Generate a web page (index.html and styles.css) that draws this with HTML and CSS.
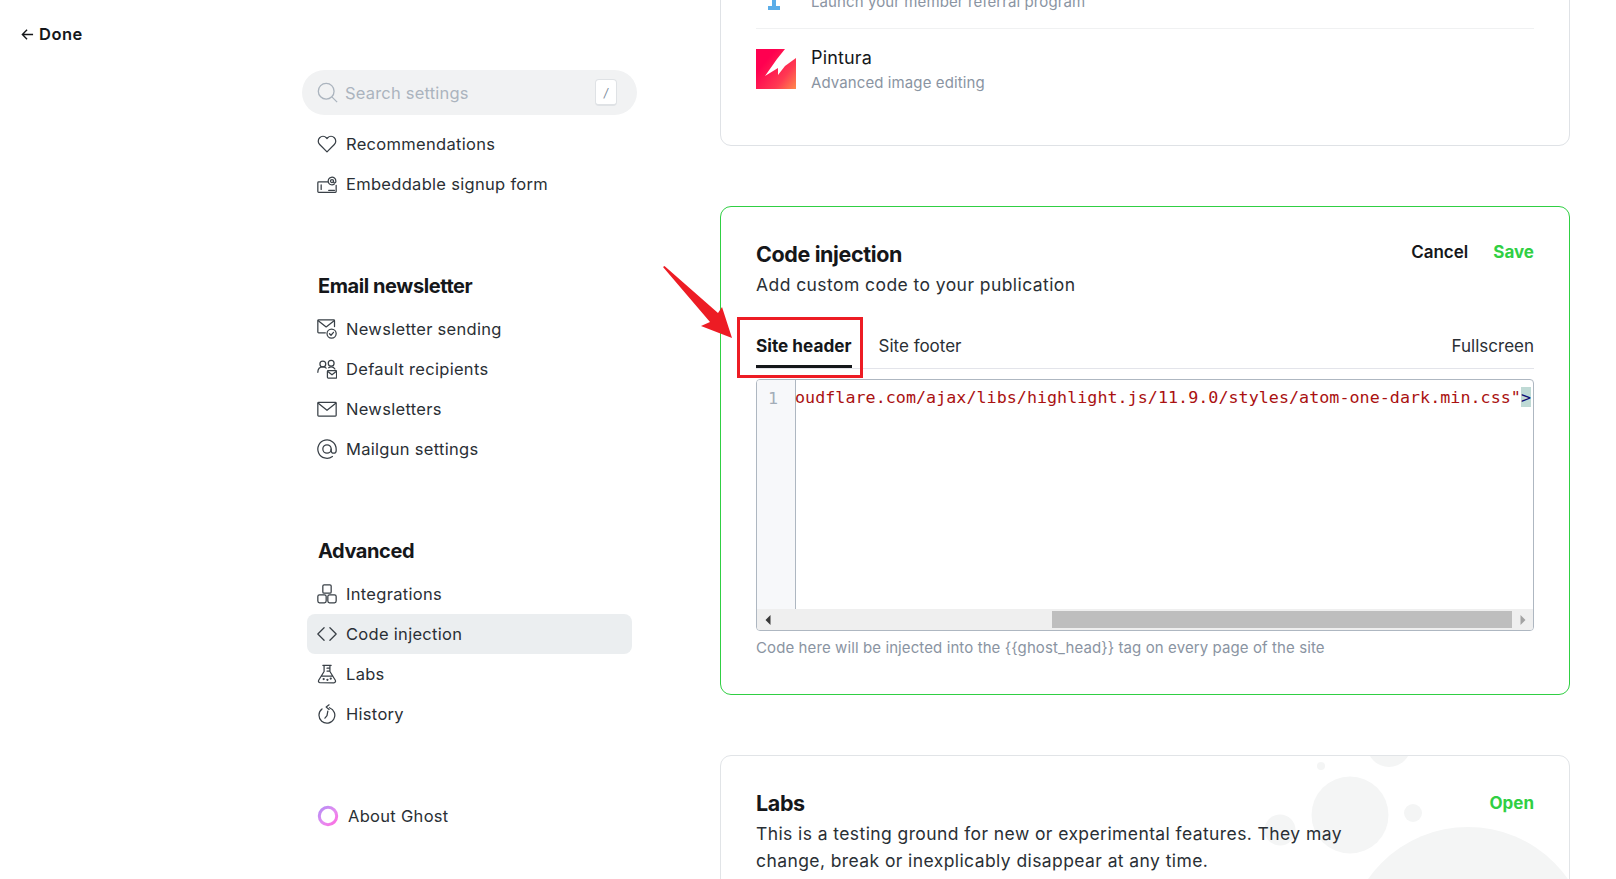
FILE: index.html
```html
<!DOCTYPE html>
<html lang="en">
<head>
<meta charset="utf-8">
<title>Settings</title>
<link rel="stylesheet" href="styles.css">
</head>
<body>
<div class="shell">
  <div class="back">
    <a class="done">
      <svg class="done-arrow" viewBox="0 0 14 14"><path d="M13 7H1.5M6.5 2 1.5 7l5 5"/></svg>
      <span>Done</span>
    </a>
  </div>

  <nav class="sidebar">
    <div class="search">
      <svg class="search-icon" viewBox="0 0 24 24"><circle cx="10.5" cy="10.5" r="9"/><path d="m17 17 6 6"/></svg>
      <span class="search-text">Search settings</span>
      <kbd class="search-key">/</kbd>
    </div>
    <ul class="nav-list">
      <li class="nav-item">
        <svg class="nav-icon" viewBox="0 0 24 24"><path d="M12 21.5 3.2 12.6a5.7 5.7 0 0 1 0-8.1 5.7 5.7 0 0 1 8 0l.8.9.8-.9a5.7 5.7 0 0 1 8 0 5.7 5.7 0 0 1 0 8.1z"/></svg>
        <span>Recommendations</span>
      </li>
      <li class="nav-item">
        <svg class="nav-icon" viewBox="0 0 24 24"><path d="M13 9.500H2a1 1 0 0 0-1 1V21a1 1 0 0 0 1 1h20a1 1 0 0 0 1-1v-7.500"/><path d="M5 13v5.500M14 19.500h7"/><circle cx="18" cy="8.500" r="1.800"/><path d="M19.800 8.500v.8a1.400 1.400 0 0 0 2.800 0v-.8a4.600 4.600 0 1 0-1.800 3.600"/></svg>
        <span>Embeddable signup form</span>
      </li>
    </ul>

    <h2 class="nav-title">Email newsletter</h2>
    <ul class="nav-list">
      <li class="nav-item">
        <svg class="nav-icon" viewBox="0 0 24 24"><path d="M10 16.5H2a1 1 0 0 1-1-1V2a1 1 0 0 1 1-1h18a1 1 0 0 1 1 1v7"/><path d="m1.500 2 9.500 7.500L20.500 2"/><circle cx="17.500" cy="17.500" r="5.500"/><path d="m15 17.700 1.800 1.800 3-3.500"/></svg>
        <span>Newsletter sending</span>
      </li>
      <li class="nav-item">
        <svg class="nav-icon" viewBox="0 0 24 24"><circle cx="7" cy="6" r="3.500"/><circle cx="17" cy="5" r="3.500"/><path d="M1 16c0-4 2.500-6.500 6-6.500 1.500 0 3 .5 4 1.500M14 10.500c1-.7 2-1 3-1 2 0 3.500.8 4.500 2.500"/><rect x="12.500" y="14" width="11" height="9" rx="1"/><path d="m13 15 5 4 5-4"/></svg>
        <span>Default recipients</span>
      </li>
      <li class="nav-item">
        <svg class="nav-icon" viewBox="0 0 24 24"><rect x="1" y="4" width="22" height="16.500" rx="1"/><path d="m1.500 5 10.500 8.500L22.500 5"/></svg>
        <span>Newsletters</span>
      </li>
      <li class="nav-item">
        <svg class="nav-icon" viewBox="0 0 24 24"><circle cx="12" cy="12" r="5"/><path d="M17 12v2a3 3 0 0 0 6 0v-2a11 11 0 1 0-4.500 9"/></svg>
        <span>Mailgun settings</span>
      </li>
    </ul>

    <h2 class="nav-title">Advanced</h2>
    <ul class="nav-list">
      <li class="nav-item">
        <svg class="nav-icon" viewBox="0 0 24 24"><rect x="7" y="1" width="10" height="10" rx="1.500"/><rect x="1" y="13" width="10" height="9.500" rx="2"/><rect x="13" y="13" width="10" height="9.500" rx="2"/></svg>
        <span>Integrations</span>
      </li>
      <li class="nav-item is-active">
        <svg class="nav-icon" viewBox="0 0 24 24"><path d="M8.500 4.500 1 12l7.500 7.500M15.500 4.500 23 12l-7.500 7.500"/></svg>
        <span>Code injection</span>
      </li>
      <li class="nav-item">
        <svg class="nav-icon" viewBox="0 0 24 24"><path d="M7 1.500h10M8.500 1.500v7.500L2 19.500A2 2 0 0 0 3.700 22.500h16.600a2 2 0 0 0 1.700-3L15.500 9V1.500M12 5h3.500M12 8.500h3.500M5 14.500h14"/><circle cx="8" cy="18" r=".6"/><circle cx="12.500" cy="19" r=".6"/><circle cx="16.500" cy="17.500" r=".6"/></svg>
        <span>Labs</span>
      </li>
      <li class="nav-item">
        <svg class="nav-icon" viewBox="0 0 24 24"><path d="M15 4.500a9.500 9.500 0 1 1-9 1.500"/><path d="M14.500 1 11 3.500l3.500 3"/><path d="M13 8.500 12 14l-2.500 3"/></svg>
        <span>History</span>
      </li>
    </ul>

    <a class="about">
      <svg class="about-ring" viewBox="0 0 22 22">
        <defs>
          <linearGradient id="ringGrad" x1="0" y1="0" x2="1" y2="1">
            <stop offset="0" stop-color="#b58cf5"/>
            <stop offset=".55" stop-color="#e58cf0"/>
            <stop offset="1" stop-color="#ff6ae0"/>
          </linearGradient>
        </defs>
        <circle cx="11" cy="11" r="8.700" fill="none" stroke="url(#ringGrad)" stroke-width="3"/>
      </svg>
      <span>About Ghost</span>
    </a>
  </nav>

  <main class="content">
    <section class="card card-top">
      <div class="app-row app-row-divided">
        <svg class="app-logo" viewBox="0 0 40 40"><path class="app-logo-blue" d="M16 24h4v12h4v4H12v-4h4z"/></svg>
        <div class="app-text-clipped">
          <div class="app-desc">Launch your member referral program</div>
        </div>
      </div>
      <div class="app-row">
        <svg class="app-logo" viewBox="0 0 40 40">
          <defs>
            <linearGradient id="pinturaGrad" x1=".2" y1=".35" x2="1" y2="1">
              <stop offset="0" stop-color="#ff0050"/>
              <stop offset=".6" stop-color="#ff3a52"/>
              <stop offset="1" stop-color="#ff8a4c"/>
            </linearGradient>
          </defs>
          <rect width="40" height="40" fill="url(#pinturaGrad)"/>
          <path fill="#fff" d="M29 0h11v9L29 17l-7 9v-7L9 27l12-17z"/>
        </svg>
        <div>
          <div class="app-name">Pintura</div>
          <div class="app-desc">Advanced image editing</div>
        </div>
      </div>
    </section>

    <section class="card card-code">
      <div class="card-head">
        <div>
          <h3 class="card-title">Code injection</h3>
          <p class="card-sub">Add custom code to your publication</p>
        </div>
        <div class="card-actions">
          <button class="btn">Cancel</button>
          <button class="btn btn-green">Save</button>
        </div>
      </div>

      <div class="tabs">
        <span class="tab is-active">Site header</span>
        <span class="tab">Site footer</span>
        <span class="tab tab-end">Fullscreen</span>
      </div>

      <div class="editor">
        <div class="editor-body">
          <div class="gutter">1</div>
          <div class="code"><span class="code-str">oudflare.com/ajax/libs/highlight.js/11.9.0/styles/atom-one-dark.min.css"</span><span class="code-tag">&gt;</span></div>
        </div>
        <div class="hscroll">
          <svg class="hscroll-arrow" viewBox="0 0 6 10"><path d="M5.500 0v10L.5 5z"/></svg>
          <div class="hscroll-track"><div class="hscroll-thumb"></div></div>
          <svg class="hscroll-arrow hscroll-arrow-off" viewBox="0 0 6 10"><path d="M.5 0v10l5-5z"/></svg>
        </div>
      </div>
      <p class="hint">Code here will be injected into the {{ghost_head}} tag on every page of the site</p>

      <div class="mark-box"></div>
      <svg class="mark-arrow" viewBox="0 0 72 74"><path d="M1 2 2.500 1 56 48l4-6 10 31-31-12 9-4z"/></svg>
    </section>

    <section class="card card-labs">
      <svg class="labs-bg" viewBox="0 0 848 200">
        <circle cx="629" cy="59" r="38.500"/>
        <circle cx="559" cy="74" r="15.500"/>
        <circle cx="692" cy="57" r="9"/>
        <circle cx="668" cy="-11" r="22"/>
        <circle cx="600" cy="10" r="4"/>
        <circle cx="747" cy="193" r="122"/>
      </svg>
      <div class="card-head labs-head">
        <h3 class="card-title">Labs</h3>
        <button class="btn btn-green">Open</button>
      </div>
      <p class="labs-text">This is a testing ground for new or experimental features. They may change, break or inexplicably disappear at any time.</p>
    </section>
  </main>
</div>
</body>
</html>
```
FILE: styles.css
```css
* { box-sizing: border-box; }
html, body { margin: 0; padding: 0; height: 100%; background: #fff; overflow: hidden; }
body { font-family: Inter, "Liberation Sans", sans-serif; color: #15171a; }
ul { list-style: none; margin: 0; padding: 0; }
h2, h3, p { margin: 0; }
button { font: inherit; background: none; border: 0; padding: 0; color: inherit; }

.shell {
  display: grid;
  grid-template-columns: 302px 335px 83px 850px;
  height: 879px;
  overflow: hidden;
}

/* Back link */
.back { padding: 22px 0 0 21px; }
.done { display: flex; align-items: center; gap: 5px; font-size: 16.500px; font-weight: 600; letter-spacing: .5px; line-height: 24px; }
.done-arrow { width: 13px; height: 13px; fill: none; stroke: #15171a; stroke-width: 1.500; }

/* Sidebar */
.sidebar { padding-top: 70px; }
.search {
  display: flex;
  align-items: center;
  height: 45px;
  margin-bottom: 9px;
  padding: 0 20px 0 15px;
  background: #f1f2f3;
  border-radius: 23px;
  color: #abb4be;
  font-size: 16.500px;
  letter-spacing: .2px;
}
.search-icon { width: 21px; height: 21px; fill: none; stroke: #abb4be; stroke-width: 1.500; flex: none; }
.search-text { margin-left: 7px; flex: 1; }
.search-key {
  width: 22px;
  height: 27px;
  display: flex;
  align-items: center;
  justify-content: center;
  background: #fff;
  border: 1px solid #dfe2e5;
  border-bottom-width: 2px;
  border-radius: 4px;
  font: 12px Inter, sans-serif;
  font-style: italic;
  color: #7c8b9a;
}
.nav-item {
  display: flex;
  align-items: center;
  gap: 9px;
  height: 40px;
  margin: 0 5px;
  padding-left: 10px;
  border-radius: 8px;
  font-size: 16.500px;
  letter-spacing: .3px;
  color: #2a2f35;
}
.nav-item.is-active { background: #ebeef0; }
.nav-icon {
  width: 20px;
  height: 20px;
  flex: none;
  fill: none;
  stroke: #394047;
  stroke-width: 1.500;
  stroke-linecap: round;
  stroke-linejoin: round;
}
.nav-title {
  margin: 68px 0 9px 16px;
  font-size: 20px;
  line-height: 28px;
  font-weight: 700;
  letter-spacing: -.42px;
}
.about {
  display: flex;
  align-items: center;
  gap: 9px;
  height: 40px;
  margin-top: 62px;
  padding-left: 15px;
  font-size: 16.500px;
  letter-spacing: .3px;
  color: #2a2f35;
}
.about-ring { width: 22px; height: 22px; flex: none; filter: blur(.5px); }

/* Right column */
.content { grid-column: 4; display: flex; flex-direction: column; gap: 60px; }
.card {
  position: relative;
  border: 1px solid #e1e4e7;
  border-radius: 11px;
  padding: 0 35px;
  background: #fff;
}
.card-top { margin-top: -59px; padding-top: 28px; padding-bottom: 56px; border-color: #dfe2e6; flex: none; }
.app-row { display: flex; gap: 15px; height: 40px; margin-top: 20px; }
.app-row-divided { margin-top: 0; height: 59px; padding-bottom: 19px; border-bottom: 1px solid #f0f1f2; }
.app-logo { width: 40px; height: 40px; flex: none; }
.app-logo-blue { fill: #5bade8; }
.app-text-clipped { padding-top: 23px; }
.app-name { font-size: 18px; line-height: 18px; letter-spacing: .15px; }
.app-desc { margin-top: 7px; font-size: 15px; line-height: 18px; color: #8a94a2; letter-spacing: .1px; }
.app-text-clipped .app-desc { margin-top: 0; }

.card-code { flex: none; height: 489px; border-color: #30cf43; padding-top: 33px; }
.card-head { display: flex; justify-content: space-between; align-items: flex-start; }
.card-title { font-size: 21.500px; line-height: 28px; font-weight: 700; letter-spacing: -.38px; }
.card-sub { margin-top: 4px; font-size: 17.500px; line-height: 26px; letter-spacing: .43px; color: #2a2f35; }
.card-actions { display: flex; gap: 25px; }
.btn { font-size: 17px; line-height: 24px; font-weight: 600; }
.btn-green { color: #30cf43; font-weight: 700; }

.tabs {
  display: flex;
  gap: 27px;
  margin-top: 33px;
  border-bottom: 1px solid #e3e4ea;
}
.tab {
  height: 37px;
  padding-top: 1px;
  line-height: 28px;
  font-size: 17px;
  border-bottom: 3px solid transparent;
  color: #2a2f35;
}
.tab.is-active { font-size: 17.200px; font-weight: 700; color: #15171a; border-bottom-color: #15171a; }
.tab-end { margin-left: auto; }

.editor {
  display: flex;
  flex-direction: column;
  height: 252px;
  margin-top: 10px;
  border: 1px solid #aeb7c1;
  border-radius: 4px;
  overflow: hidden;
}
.editor-body { display: flex; flex: 1; min-height: 0; }
.gutter {
  width: 39px;
  flex: none;
  padding-top: 6px;
  padding-right: 17px;
  text-align: right;
  background: #f7f8fa;
  border-right: 1px solid #aeb7c1;
  font: 16.700px/24px "DejaVu Sans Mono", monospace;
  color: #a3adb8;
}
.code {
  padding-top: 5px;
  margin-left: -1px;
  white-space: pre;
  font: 16.700px/24px "DejaVu Sans Mono", monospace;
  letter-spacing: .035px;
  overflow: hidden;
  flex: 1;
}
.code-str { color: #a11; }
.code-tag { color: #117; background: #bfdad5; }
.hscroll {
  display: flex;
  align-items: center;
  height: 21px;
  flex: none;
  background: #efefef;
}
.hscroll-arrow { width: 6px; height: 10px; margin: 0 5px 0 8px; flex: none; fill: #3a3a3a; }
.hscroll-arrow-off { margin: 0 7px 0 8px; fill: #a3a3a3; }
.hscroll-track { flex: 1; height: 17px; display: flex; justify-content: flex-end; }
.hscroll-thumb { width: 460px; height: 17px; background: #bebebe; }
.hint { margin-top: 5px; font-size: 15px; line-height: 24px; color: #8a94a2; letter-spacing: .1px; }

/* Annotation overlays */
.mark-box {
  position: absolute;
  left: 16px;
  top: 110px;
  width: 126px;
  height: 61px;
  border: 3px solid #ed1c24;
}
.mark-arrow {
  position: absolute;
  left: -59px;
  top: 58px;
  width: 72px;
  height: 74px;
  fill: #ed1c24;
}

/* Labs */
.card-labs { flex: none; height: 200px; padding-top: 33px; overflow: hidden; }
.labs-bg { position: absolute; left: 0; top: 0; width: 848px; height: 200px; fill: #f4f5f5; }
.labs-head { position: relative; align-items: center; }
.labs-text {
  position: relative;
  max-width: 600px;
  margin-top: 3px;
  font-size: 17.500px;
  line-height: 27px;
  letter-spacing: .41px;
  color: #2a2f35;
}
```
